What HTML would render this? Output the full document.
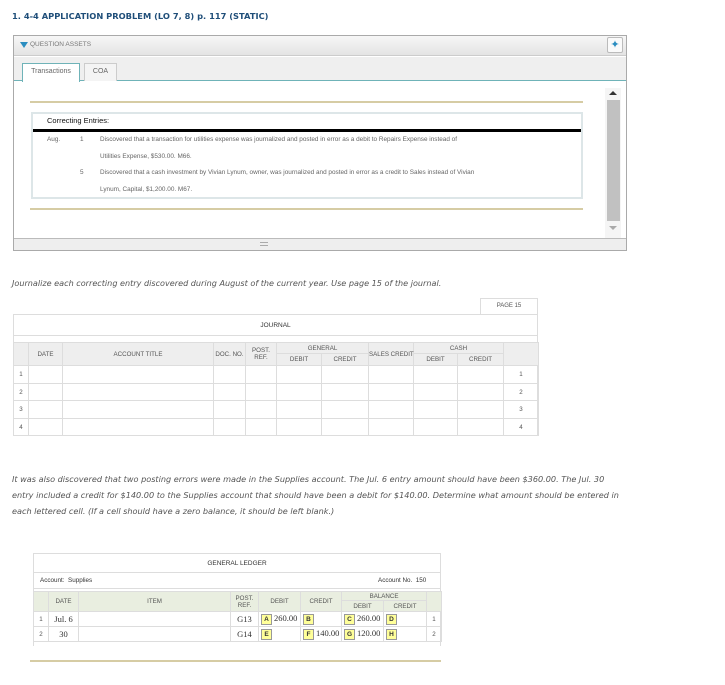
<!DOCTYPE html>
<html><head><meta charset="utf-8"><style>
*{box-sizing:border-box;margin:0;padding:0}
body{width:725px;height:685px;background:#fff;position:relative;font-family:"DejaVu Sans","Liberation Sans",sans-serif;overflow:hidden}
.a{position:absolute}
.t{font-family:"Liberation Sans",sans-serif}
.it{font-style:italic;color:#555;font-size:8.15px;line-height:16px}
table{border-collapse:collapse;position:absolute;table-layout:fixed}
td{border:1px solid #ddd;font-size:6.2px;color:#555;text-align:center;padding:0;white-space:nowrap}
.lt{width:11px;height:11px;background:#ffff99;border:1px solid #999;display:inline-block;font-size:6.5px;line-height:9px;text-align:center;font-weight:bold;color:#333;vertical-align:middle;margin:0 2px;font-family:"Liberation Sans",sans-serif}
.gl{font-family:"Liberation Serif",serif;font-size:8.5px;color:#333}
</style></head><body>
<div class="a" style="left:12px;top:11px;font-size:8.3px;font-weight:bold;color:#1f4e79">1. 4-4 APPLICATION PROBLEM (LO 7, 8) p. 117 (STATIC)</div>

<div class="a" style="left:13px;top:35px;width:614px;height:216px;border:1px solid #aaa;background:#fff"></div>
<div class="a" style="left:14px;top:36px;width:612px;height:20px;background:linear-gradient(#f7f7f7,#e4e4e4);border-bottom:1px solid #ccc"></div>
<div class="a" style="left:20px;top:42px;width:0;height:0;border-left:4px solid transparent;border-right:4px solid transparent;border-top:6px solid #2a8dc0"></div>
<div class="a t" style="left:30px;top:41px;font-size:6.5px;color:#777">QUESTION ASSETS</div>
<div class="a" style="left:607px;top:37px;width:16px;height:16px;border:1px solid #bbb;border-radius:2px;background:#fafafa;color:#2a8dc0;font-size:11px;line-height:14px;text-align:center">✦</div>
<div class="a" style="left:14px;top:57px;width:612px;height:24px;background:#efefef;border-bottom:1px solid #6fb3b8"></div>
<div class="a t" style="left:22px;top:63px;width:58px;height:19px;background:#fff;border:1px solid #6fb3b8;border-bottom:none;font-size:7px;color:#666;text-align:center;line-height:16px">Transactions</div>
<div class="a t" style="left:84px;top:63px;width:33px;height:18px;background:#f4f4f4;border:1px solid #ccc;border-bottom:none;font-size:7px;color:#666;text-align:center;line-height:16px">COA</div>
<div class="a" style="left:30px;top:101px;width:553px;height:2px;background:#d6cca4"></div>
<div class="a" style="left:31px;top:112px;width:552px;height:87px;border:2px solid #dde6e8"></div>
<div class="a t" style="left:47px;top:116px;font-size:7.5px;color:#111">Correcting Entries:</div>
<div class="a" style="left:33px;top:129px;width:548px;height:3px;background:#000"></div>
<div class="a t" style="left:47px;top:132px;font-size:6.4px;color:#666;line-height:16.5px">Aug.</div>
<div class="a t" style="left:80px;top:132px;font-size:6.4px;color:#666;line-height:16.5px">1<br><br>5</div>
<div class="a t" style="left:100px;top:132px;font-size:6.4px;color:#666;line-height:16.5px;width:480px;white-space:nowrap">Discovered that a transaction for utilities expense was journalized and posted in error as a debit to Repairs Expense instead of<br>Utilities Expense, $530.00. M66.<br>Discovered that a cash investment by Vivian Lynum, owner, was journalized and posted in error as a credit to Sales instead of Vivian<br>Lynum, Capital, $1,200.00. M67.</div>
<div class="a" style="left:30px;top:208px;width:553px;height:2px;background:#d6cca4"></div>
<div class="a" style="left:605px;top:88px;width:16px;height:150px;background:#f5f5f5"></div>
<div class="a" style="left:609px;top:91px;width:0;height:0;border-left:4px solid transparent;border-right:4px solid transparent;border-bottom:4px solid #333"></div>
<div class="a" style="left:607px;top:100px;width:13px;height:121px;background:#c1c1c1"></div>
<div class="a" style="left:609px;top:226px;width:0;height:0;border-left:4px solid transparent;border-right:4px solid transparent;border-top:4px solid #aaa"></div>
<div class="a" style="left:14px;top:238px;width:612px;height:12px;background:#eee;border-top:1px solid #bbb"></div>
<div class="a" style="left:260px;top:242px;width:8px;height:4px;border-top:1px solid #aaa;border-bottom:1px solid #aaa"></div>

<div class="a it" style="left:12px;top:275px;white-space:nowrap;font-size:8.1px">Journalize each correcting entry discovered during August of the current year. Use page 15 of the journal.</div>

<div class="a t" style="left:480px;top:298px;width:58px;height:17px;border:1px solid #ddd;border-bottom:none;background:#fff;font-size:6px;color:#555;text-align:center;line-height:15px">PAGE 15</div>
<div class="a" style="left:13px;top:314px;width:525px;height:122px;border:1px solid #ddd;border-bottom:none"></div>
<div class="a t" style="left:13px;top:322px;width:525px;text-align:center;font-size:6.5px;color:#333">JOURNAL</div>
<div class="a" style="left:14px;top:335px;width:523px;height:7px;border-top:1px solid #ddd"></div>
<table class="t" style="left:13px;top:342px;width:525px">
<colgroup><col style="width:15px"><col style="width:34px"><col style="width:151px"><col style="width:32px"><col style="width:31px"><col style="width:45px"><col style="width:47px"><col style="width:45px"><col style="width:44px"><col style="width:46px"><col style="width:35px"></colgroup>
<tr style="height:11px;background:#eee"><td rowspan="2"></td><td rowspan="2">DATE</td><td rowspan="2">ACCOUNT TITLE</td><td rowspan="2">DOC. NO.</td><td rowspan="2">POST.<br>REF.</td><td colspan="2">GENERAL</td><td rowspan="2">SALES CREDIT</td><td colspan="2">CASH</td><td rowspan="2"></td></tr>
<tr style="height:12px;background:#eee"><td>DEBIT</td><td>CREDIT</td><td>DEBIT</td><td>CREDIT</td></tr>
<tr style="height:18px"><td>1</td><td></td><td></td><td></td><td></td><td></td><td></td><td></td><td></td><td></td><td>1</td></tr>
<tr style="height:17px"><td>2</td><td></td><td></td><td></td><td></td><td></td><td></td><td></td><td></td><td></td><td>2</td></tr>
<tr style="height:18px"><td>3</td><td></td><td></td><td></td><td></td><td></td><td></td><td></td><td></td><td></td><td>3</td></tr>
<tr style="height:17px"><td>4</td><td></td><td></td><td></td><td></td><td></td><td></td><td></td><td></td><td></td><td>4</td></tr>
</table>

<div class="a it" style="left:12px;top:471px;width:620px;white-space:nowrap">It was also discovered that two posting errors were made in the Supplies account. The Jul. 6 entry amount should have been $360.00. The Jul. 30<br>entry included a credit for $140.00 to the Supplies account that should have been a debit for $140.00. Determine what amount should be entered in<br>each lettered cell. (If a cell should have a zero balance, it should be left blank.)</div>

<div class="a" style="left:33px;top:553px;width:408px;height:93px;border:1px solid #ddd;border-bottom:none"></div>
<div class="a t" style="left:33px;top:560px;width:408px;text-align:center;font-size:6.5px;color:#333">GENERAL LEDGER</div>
<div class="a" style="left:34px;top:572px;width:406px;border-top:1px solid #ddd"></div>
<div class="a t" style="left:40px;top:577px;font-size:6.3px;color:#333">Account: &nbsp;Supplies</div>
<div class="a t" style="left:378px;top:577px;font-size:6.3px;color:#333">Account No. &nbsp;150</div>
<div class="a" style="left:34px;top:588px;width:406px;border-top:1px solid #ddd"></div>
<table class="t" style="left:33px;top:591px;width:408px">
<colgroup><col style="width:15px"><col style="width:30px"><col style="width:152px"><col style="width:28px"><col style="width:42px"><col style="width:41px"><col style="width:42px"><col style="width:43px"><col style="width:15px"></colgroup>
<tr style="height:9px;background:#e9eee0"><td rowspan="2"></td><td rowspan="2">DATE</td><td rowspan="2">ITEM</td><td rowspan="2">POST.<br>REF.</td><td rowspan="2">DEBIT</td><td rowspan="2">CREDIT</td><td colspan="2">BALANCE</td><td rowspan="2"></td></tr>
<tr style="height:11px;background:#e9eee0"><td>DEBIT</td><td>CREDIT</td></tr>
<tr style="height:15px"><td>1</td><td class="gl">Jul. 6</td><td></td><td class="gl">G13</td><td style="text-align:left" class="gl"><span class="lt">A</span>260.00</td><td style="text-align:left"><span class="lt">B</span></td><td style="text-align:left" class="gl"><span class="lt">C</span>260.00</td><td style="text-align:left"><span class="lt">D</span></td><td>1</td></tr>
<tr style="height:15px"><td>2</td><td class="gl">30</td><td></td><td class="gl">G14</td><td style="text-align:left"><span class="lt">E</span></td><td style="text-align:left" class="gl"><span class="lt">F</span>140.00</td><td style="text-align:left" class="gl"><span class="lt">G</span>120.00</td><td style="text-align:left"><span class="lt">H</span></td><td>2</td></tr>
</table>
<div class="a" style="left:30px;top:660px;width:411px;height:2px;background:#d6cca4"></div>
</body></html>
